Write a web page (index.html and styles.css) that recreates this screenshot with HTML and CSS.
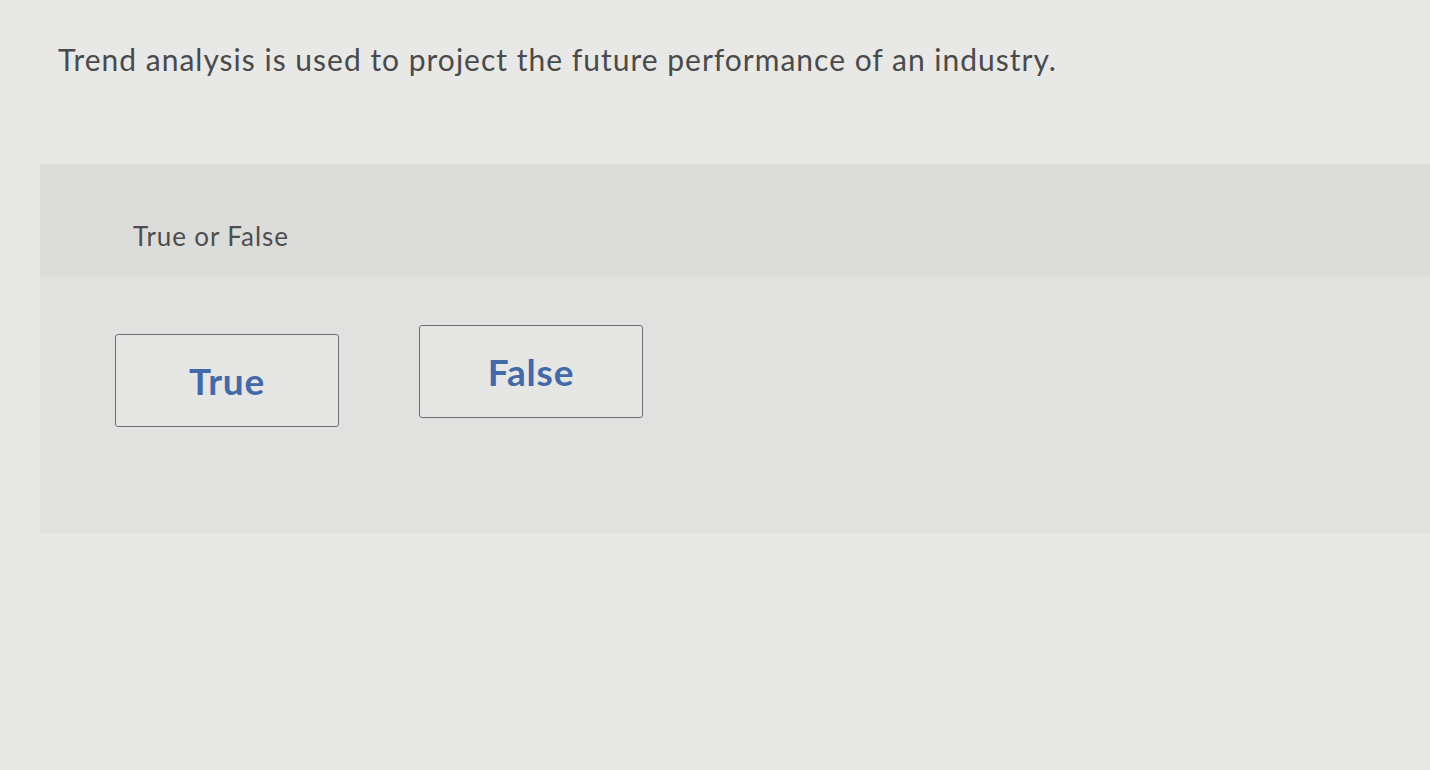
FILE: index.html
```html
<!DOCTYPE html>
<html>
<head>
<meta charset="utf-8">
<link rel="stylesheet" href="styles.css">
</head>
<body>
<div class="page">
  <p class="question">Trend analysis is used to project the future performance of an industry.</p>
  <section class="panel">
    <div class="panel-head">True or False</div>
    <div class="panel-body">
      <button class="choice choice-true">True</button>
      <button class="choice choice-false">False</button>
    </div>
  </section>
</div>
</body>
</html>
```
FILE: styles.css
```css
html, body {
  margin: 0;
  padding: 0;
  background: #e8e8e7;
  width: 1430px;
  height: 770px;
  overflow: hidden;
  font-family: Lato, "Open Sans", "Liberation Sans", sans-serif;
}
.page {
  padding-top: 39px;
}
.question {
  margin: 0 0 0 58px;
  font-size: 30px;
  color: #4a4a4a;
  letter-spacing: 1px;
  line-height: 40px;
}
.panel {
  margin: 85px 0 0 40px;
  background: #e1e1e0;
  height: 370px;
}
.panel-head {
  background: #dcdcdb;
  height: 112px;
  box-sizing: border-box;
  padding: 56px 0 0 93px;
  font-size: 26px;
  color: #4e4e4e;
  letter-spacing: 0.9px;
}
.panel-body {
  display: flex;
  gap: 80px;
  padding: 58px 0 0 75px;
  align-items: flex-start;
}
.choice {
  width: 224px;
  height: 93px;
  background: #e6e6e5;
  border: 1.5px solid #6d6f72;
  border-radius: 3px;
  font-family: Lato, "Open Sans", sans-serif;
  font-weight: 700;
  font-size: 37px;
  letter-spacing: 0.8px;
  color: #4469a8;
}
.choice-false {
  margin-top: -9px;
}
```
